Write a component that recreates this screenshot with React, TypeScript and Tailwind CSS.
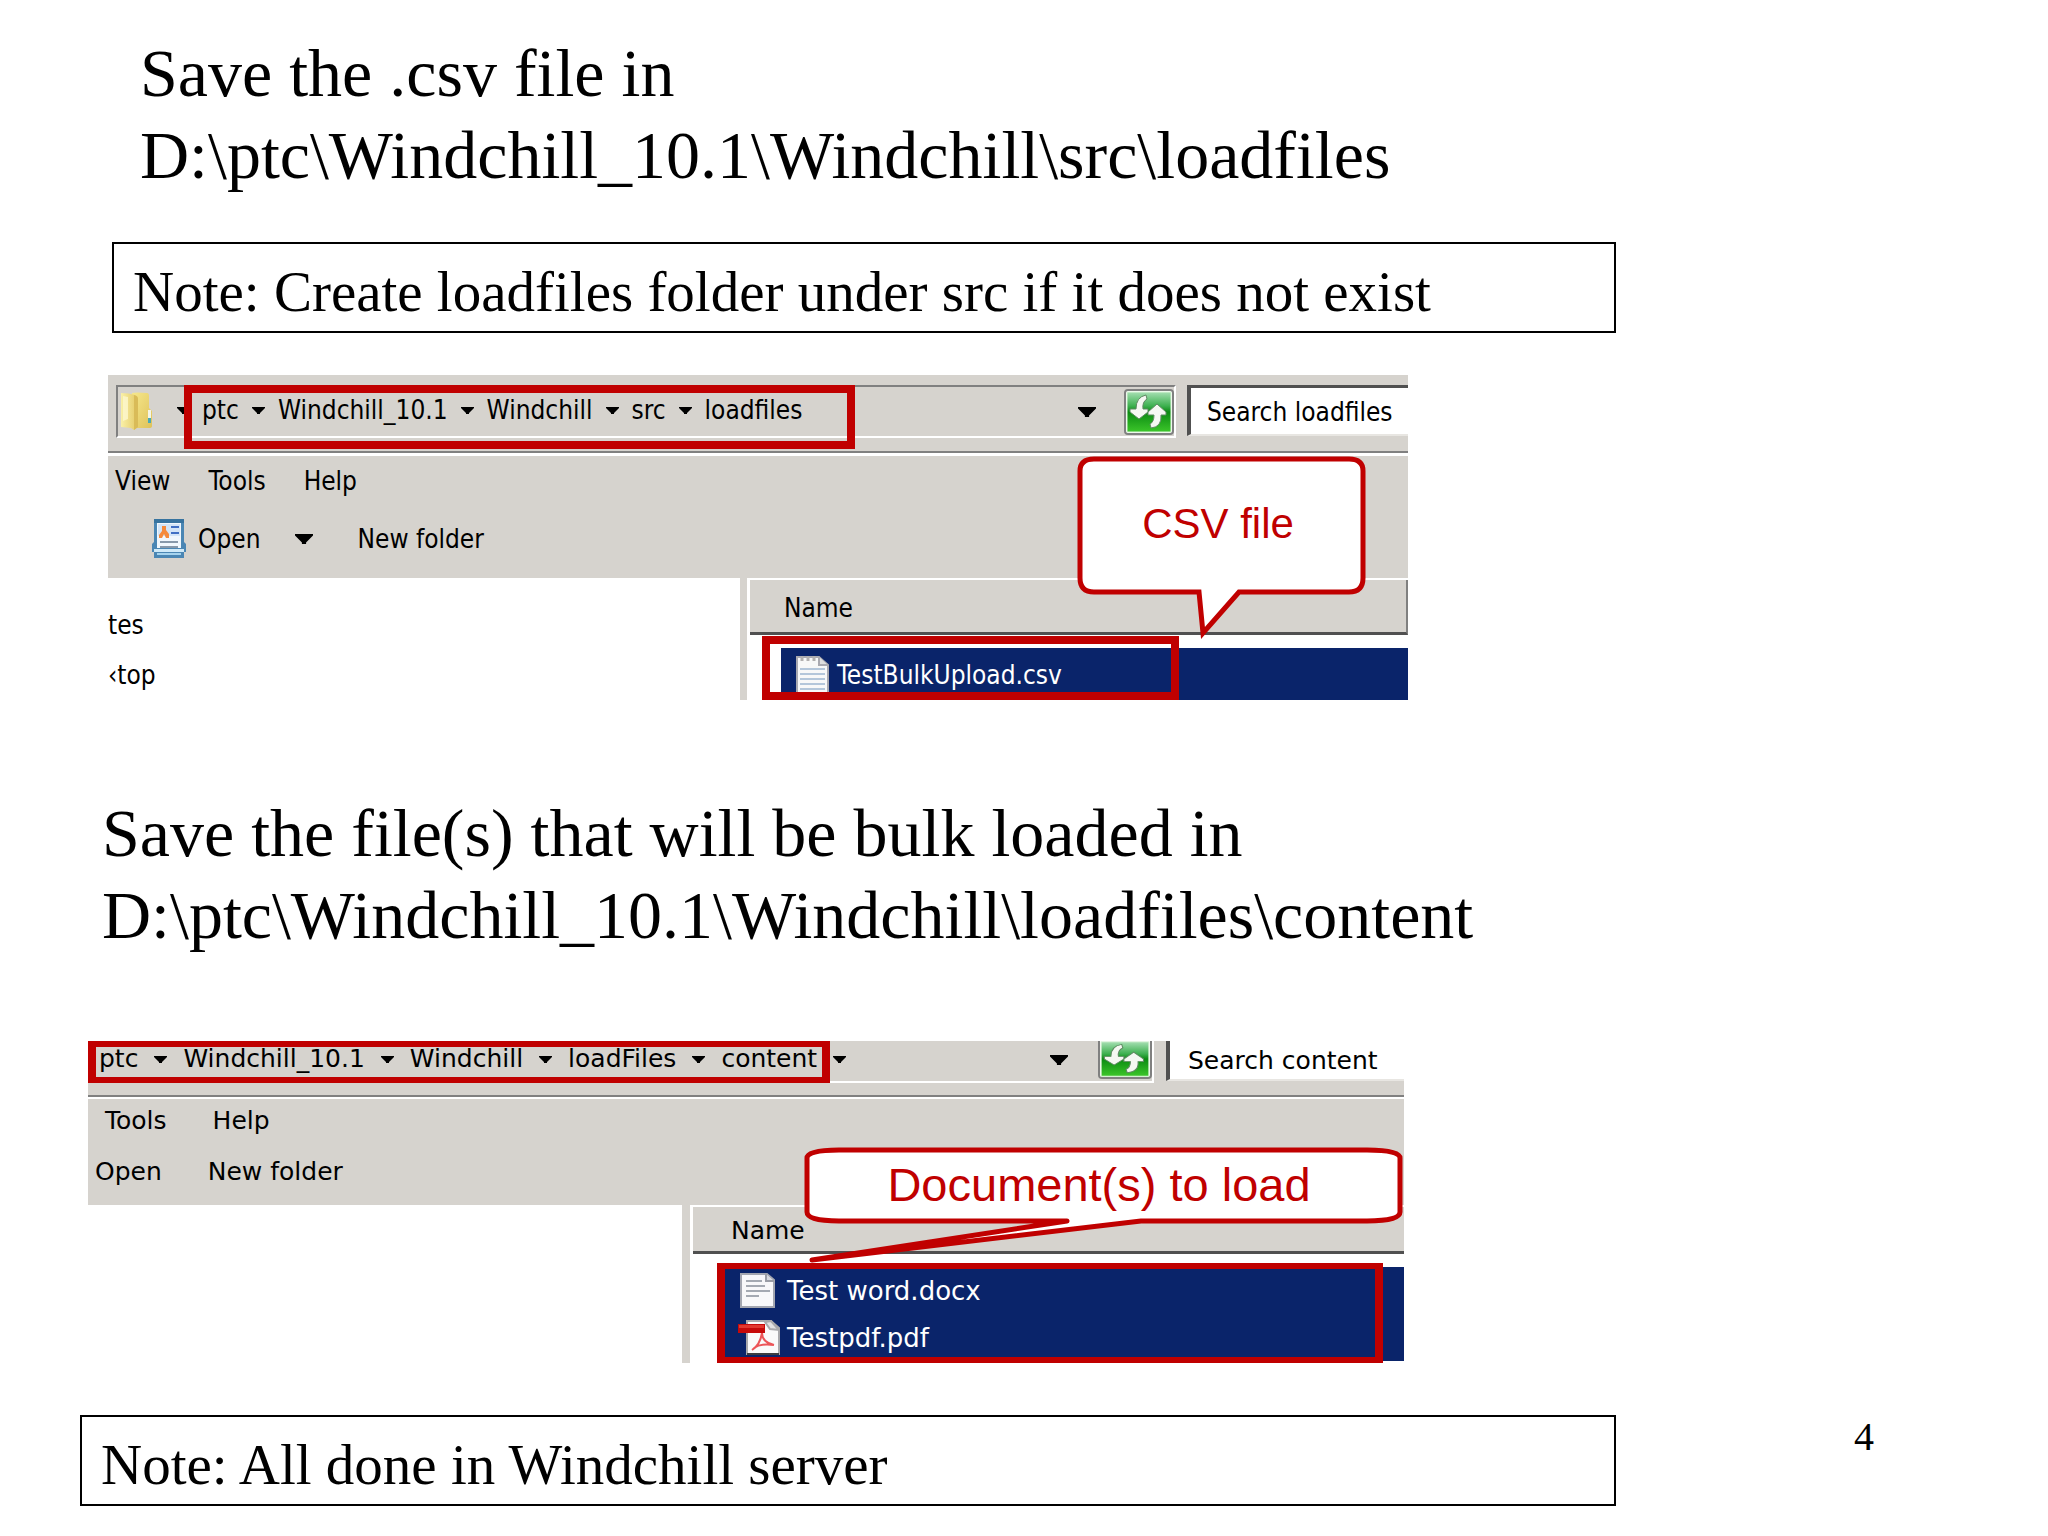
import type { ReactNode } from "react";

type CrumbProps = {
  path: string[];
  trailing?: boolean;
  className: string;
};

type FileItem = {
  name: string;
  icon: ReactNode;
};

type FileTableProps = {
  files: FileItem[];
  headClass: string;
  rowClass: string;
};

function Arrow({ large = false }: { large?: boolean }) {
  return (
    <svg
      viewBox="0 0 13 7"
      preserveAspectRatio="none"
      className={large ? "h-[10px] w-[18px] shrink-0" : "h-[7px] w-[13px] shrink-0"}
      aria-hidden="true"
    >
      <path d="M0 0h13v1l-5 5v1h-3v-1l-5-5z" fill="#000" />
    </svg>
  );
}

function FolderIcon() {
  return (
    <svg viewBox="0 0 34 42" className="h-[42px] w-[34px] shrink-0" aria-hidden="true">
      <defs>
        <linearGradient id="folderFront" x1="0" x2="1" y1="0" y2="0">
          <stop offset="0" stopColor="#f9f0a8" />
          <stop offset="1" stopColor="#e3c863" />
        </linearGradient>
        <linearGradient id="folderBack" x1="0" x2="1" y1="0" y2="1">
          <stop offset="0" stopColor="#f6e88c" />
          <stop offset="1" stopColor="#dfc25a" />
        </linearGradient>
      </defs>
      <path d="M12 2q4-1 15 0q2 0 2 3v12l3 3v15q0 2-3 2H12z" fill="url(#folderBack)" />
      <path d="M1 2q8 0 14 2q3 1 3 4v28l-4 3l-3-2L1 36z" fill="url(#folderFront)" />
      <path d="M14 4q4 1 4 4v28l-4 3z" fill="#d9bb58" />
      <path d="M3 5l5 1v22l-5 2z" fill="#fdf8cf" opacity=".8" />
      <path d="M28 19h3v13h-3z" fill="#f4f5e6" />
      <path d="M28 27h3v5h-3z" fill="#4aa9b4" />
    </svg>
  );
}

function OpenIcon() {
  return (
    <svg viewBox="0 0 34 40" className="h-10 w-[34px] shrink-0" aria-hidden="true">
      <path d="M2 0h30v23l2 2v8h-2v6H2v-6H0v-8l2-2z" fill="#4a86b4" />
      <path d="M2 0h30v4H2z" fill="#37739f" />
      <path d="M5 4h24v25H5z" fill="#f0f7fd" />
      <path d="M6 5h22v12H6z" fill="#d3e5f8" />
      <path d="M2 30h30v3H2z" fill="#cfe9f8" />
      <path d="M5 34h24v2H5z" fill="#a5d3ee" />
      <path d="M10 7h4v4l3 4v4h-3l-2-4-2 4H7v-3l3-4z" fill="#f58a3c" />
      <path d="M19 7h8v2h-8zM19 13h8v2h-8z" fill="#3f6fc4" />
      <path d="M8 22h18v2H8zM8 27h18v2H8z" fill="#8798aa" />
    </svg>
  );
}

function NotepadIcon() {
  return (
    <svg viewBox="0 0 33 40" className="h-10 w-[33px] shrink-0" aria-hidden="true">
      <path d="M1 2h22l9 8v29H1z" fill="#f8f8f8" stroke="#a9a9b0" strokeWidth="2" />
      <path d="M6 1v5M12 1v5M18 1v5" stroke="#b2b0b0" strokeWidth="3" />
      <path d="M23 2v8h9" fill="#dedede" stroke="#a9a9b0" strokeWidth="2" />
      <path d="M4 14h25M4 19h25M4 24h25M4 29h25M4 34h25" stroke="#b4c6da" strokeWidth="2" />
    </svg>
  );
}

function DocIcon() {
  return (
    <svg viewBox="0 0 42 36" className="h-9 w-[42px] shrink-0" aria-hidden="true">
      <path d="M3 1h26l7 6v27H3z" fill="#f8f8fa" stroke="#a3a6b0" strokeWidth="2" />
      <path d="M28 1v7h8" fill="#d8dae0" stroke="#9a9da6" strokeWidth="2" />
      <path d="M8 8h16M8 13h19M8 18h24M8 23h13" stroke="#a4a9b2" strokeWidth="2" />
    </svg>
  );
}

function PdfIcon() {
  return (
    <svg viewBox="0 0 42 36" className="h-9 w-[42px] shrink-0" aria-hidden="true">
      <path d="M9 1h24l8 7v26H9z" fill="#fafafa" stroke="#a9a9ac" strokeWidth="2" />
      <path d="M27 2l5 7 9 1-8-9z" fill="#e2e2e2" stroke="#a9a9ac" strokeWidth="2" />
      <path d="M9 34h32" stroke="#3c3c40" strokeWidth="2" />
      <path
        d="M14 30q8-5 10-17M24 13q0 9 12 12M16 28q7-5 20-3"
        fill="none"
        stroke="#ec5558"
        strokeWidth="2"
      />
      <path d="M0 4h27v9H0z" fill="#c60a0a" />
      <path d="M1 5h25v3H1z" fill="#e2382f" />
    </svg>
  );
}

function RefreshButton({ short = false }: { short?: boolean }) {
  return (
    <button
      type="button"
      aria-label="Refresh"
      className={
        short
          ? "h-[38px] w-[54px] shrink-0 rounded-b border-2 border-t-0 border-[#808080] bg-white"
          : "h-[46px] w-[50px] shrink-0 rounded border-2 border-[#808080] bg-white"
      }
    >
      <svg viewBox="0 0 46 42" preserveAspectRatio="none" className="h-full w-full" aria-hidden="true">
        <defs>
          <linearGradient id="refreshGreen" x1="0" x2="0" y1="0" y2="1">
            <stop offset="0" stopColor="#a5dfb2" />
            <stop offset=".35" stopColor="#3db04f" />
            <stop offset=".5" stopColor="#0b8a12" />
            <stop offset="1" stopColor="#3cc62a" />
          </linearGradient>
        </defs>
        <path d="M1 1h44v40H1z" fill="url(#refreshGreen)" stroke="#d9f3d6" strokeWidth="1" />
        <g fill="#f5f8f2" stroke="#5f8a62" strokeWidth="1">
          <path d="M20 4q-10 2-10 14H4v3l9 7 9-7v-3h-5q-1-7 4-10z" />
          <path d="M25 37q11-1 10-13h5v-3l-9-8-9 8v3h6q0 7-4 9z" />
        </g>
      </svg>
    </button>
  );
}

function Crumbs({ path, trailing = false, className }: CrumbProps) {
  return (
    <nav aria-label="Folder path" className={`flex items-center ${className}`}>
      {path.map((part, i) => [
        i > 0 && <Arrow key={`${part}-arrow`} />,
        <a key={part} href="#">
          {part}
        </a>,
      ])}
      {trailing && <Arrow />}
    </nav>
  );
}

function Heading({ children }: { children: ReactNode }) {
  return <h2 className="text-[68px] leading-[82px]">{children}</h2>;
}

function Note({ children }: { children: ReactNode }) {
  return (
    <p className="w-full border-2 border-black pt-4 pr-4 pb-[7px] pl-[19px] text-[57px] leading-[64px]">
      {children}
    </p>
  );
}

function FileTable({ files, headClass, rowClass }: FileTableProps) {
  return (
    <div className="flex-1 bg-white">
      <table className="w-full border-separate border-spacing-0">
        <thead>
          <tr>
            <th className="border-t-2 border-l-3 border-white p-0 pb-[13px] text-left font-normal">
              <div className={`flex items-center border-b-3 border-b-[#505050] bg-[#d6d3ce] ${headClass}`}>
                Name
              </div>
            </th>
          </tr>
        </thead>
        <tbody>
          {files.map((file) => (
            <tr key={file.name}>
              <td className="p-0 pl-[34px] text-[26px]">
                <div className={`flex items-center bg-[#0a246a] text-white ${rowClass}`}>
                  {file.icon}
                  {file.name}
                </div>
              </td>
            </tr>
          ))}
        </tbody>
      </table>
    </div>
  );
}

function CsvWindow() {
  return (
    <div className="relative w-full max-w-[1300px] overflow-hidden bg-[#d6d3ce] font-['DejaVu_Sans_Condensed','DejaVu_Sans',sans-serif] text-[26px] leading-8">
      <div className="flex h-[78px] items-start gap-[11px] border-b-2 border-[#808080] pt-[10px] pl-2">
        <div className="flex h-[53px] flex-1 items-center border-2 border-t-[#808080] border-r-white border-b-white border-l-[#808080] pl-[2px]">
          <FolderIcon />
          <div className="flex items-center gap-3 pb-[3px] pl-[23px]">
            <Arrow />
            <Crumbs
              path={["ptc", "Windchill_10.1", "Windchill", "src", "loadfiles"]}
              className="gap-[13px]"
            />
          </div>
          <button type="button" aria-label="Previous locations" className="mr-7 ml-auto">
            <Arrow large />
          </button>
          <RefreshButton />
        </div>
        <input
          type="text"
          aria-label="Search loadfiles"
          defaultValue="Search loadfiles"
          className="h-[51px] w-[221px] border-t-3 border-b-2 border-l-4 border-t-[#505050] border-b-[#e8e6e2] border-l-[#505050] bg-white pt-[2px] pl-4 outline-none"
        />
      </div>

      <div className="flex h-[57px] items-center gap-[38px] border-t-3 border-white pb-1 pl-[7px]">
        <button type="button">View</button>
        <button type="button">Tools</button>
        <button type="button">Help</button>
      </div>

      <div className="flex h-[68px] items-center pb-[10px] pl-11">
        <button type="button" className="flex items-center gap-3">
          <OpenIcon />
          Open
        </button>
        <button type="button" aria-label="Open with" className="ml-[34px]">
          <Arrow large />
        </button>
        <button type="button" className="ml-[45px]">New folder</button>
      </div>

      <div className="flex">
        <ul className="h-[122px] w-[632px] shrink-0 bg-white pt-[22px] leading-[50px]">
          <li>tes</li>
          <li>‹top</li>
        </ul>
        <div className="w-[7px] shrink-0" />
        <FileTable
          files={[{ name: "TestBulkUpload.csv", icon: <NotepadIcon /> }]}
          headClass="h-[55px] border-r-2 border-r-[#808080] pt-1 pl-[34px]"
          rowClass="h-[52px] gap-2 pt-[2px] pl-[15px]"
        />
      </div>

      <div className="absolute top-[10px] left-[76px] h-16 w-[671px] border-8 border-[#c00000]" />
      <div className="absolute top-[261px] left-[654px] h-16 w-[417px] border-8 border-[#c00000]" />

      <div className="absolute top-20 left-[968px] h-[184px] w-[292px]">
        <svg viewBox="0 0 292 184" className="absolute inset-0 h-full w-full" aria-hidden="true">
          <path
            d="M18 4H273Q287 4 287 16V123Q287 137 273 137H163L127 178L123 137H18Q4 137 4 123V16Q4 4 18 4Z"
            fill="#fff"
            stroke="#c00000"
            strokeWidth="5"
          />
        </svg>
        <p className="relative pt-[42px] pr-2 text-center font-['Liberation_Sans',Arial,sans-serif] text-[42px] leading-[54px] text-[#c00000]">
          CSV file
        </p>
      </div>
    </div>
  );
}

function ContentWindow() {
  return (
    <div className="relative w-full max-w-[1316px] overflow-hidden bg-[#d6d3ce] font-['DejaVu_Sans',sans-serif] text-[25px] leading-8">
      <div className="flex h-14 items-start gap-3 border-b-2 border-[#808080]">
        <div className="flex h-[42px] flex-1 items-start border-r-2 border-b-2 border-white pl-[11px]">
          <div className="pt-[2px]">
            <Crumbs
              path={["ptc", "Windchill_10.1", "Windchill", "loadFiles", "content"]}
              className="gap-4"
              trailing
            />
          </div>
          <button type="button" aria-label="Previous locations" className="mt-[14px] mr-[30px] ml-auto">
            <Arrow large />
          </button>
          <RefreshButton short />
        </div>
        <input
          type="text"
          aria-label="Search content"
          defaultValue="Search content"
          className="h-10 w-[238px] border-b-2 border-l-4 border-b-[#e8e6e2] border-l-[#505050] bg-white pl-[18px] outline-none"
        />
      </div>

      <div className="flex h-[52px] items-center gap-[46px] border-t-2 border-white pb-[6px] pl-[17px]">
        <button type="button">Tools</button>
        <button type="button">Help</button>
      </div>

      <div className="flex h-14 items-start gap-[46px] pt-[7px] pl-[7px]">
        <button type="button">Open</button>
        <button type="button">New folder</button>
      </div>

      <div className="flex">
        <div className="h-[158px] w-[594px] shrink-0 bg-white" />
        <div className="w-2 shrink-0" />
        <FileTable
          files={[
            { name: "Test word.docx", icon: <DocIcon /> },
            { name: "Testpdf.pdf", icon: <PdfIcon /> },
          ]}
          headClass="h-[47px] pt-1 pl-[38px]"
          rowClass="h-[47px] gap-[7px] pl-[14px]"
        />
      </div>

      <div className="absolute top-0 left-0 h-[42px] w-[742px] border-x-8 border-y-6 border-[#c00000]" />
      <div className="absolute top-[222px] left-[629px] h-[100px] w-[666px] border-x-8 border-y-6 border-[#c00000]" />

      <div className="absolute top-[105px] left-[715px] h-[117px] w-[600px]">
        <svg viewBox="0 0 600 117" className="absolute inset-0 h-full w-full" aria-hidden="true">
          <path
            d="M36 4H564Q597 4 597 12V66Q597 75 564 75H338L9 114L264 75H36Q4 75 4 66V12Q4 4 36 4Z"
            fill="#fff"
            stroke="#c00000"
            strokeWidth="5"
            strokeLinejoin="round"
          />
        </svg>
        <p className="relative pt-3 pr-2 text-center font-['Liberation_Sans',Arial,sans-serif] text-[47px] leading-[54px] text-[#c00000]">
          Document(s) to load
        </p>
      </div>
    </div>
  );
}

export default function App() {
  return (
    <main className="min-h-screen bg-white pt-8 pb-7 font-['Liberation_Serif','Times_New_Roman',serif] text-black">
      <div className="pl-[140px]">
        <Heading>
          Save the .csv file in
          <br />
          D:\ptc\Windchill_10.1\Windchill\src\loadfiles
        </Heading>
      </div>

      <div className="mt-[46px] max-w-[1616px] pl-28">
        <Note>Note: Create loadfiles folder under src if it does not exist</Note>
      </div>

      <div className="mt-[42px] pl-[108px]">
        <CsvWindow />
      </div>

      <div className="mt-[92px] pl-[102px]">
        <Heading>
          Save the file(s) that will be bulk loaded in
          <br />
          D:\ptc\Windchill_10.1\Windchill\loadfiles\content
        </Heading>
      </div>

      <div className="mt-[85px] pl-[88px]">
        <ContentWindow />
      </div>

      <footer className="mt-[52px] flex items-start justify-between pr-[174px] pl-20">
        <div className="w-full max-w-[1536px]">
          <Note>Note: All done in Windchill server</Note>
        </div>
        <span className="text-[40px] leading-[44px]">4</span>
      </footer>
    </main>
  );
}
